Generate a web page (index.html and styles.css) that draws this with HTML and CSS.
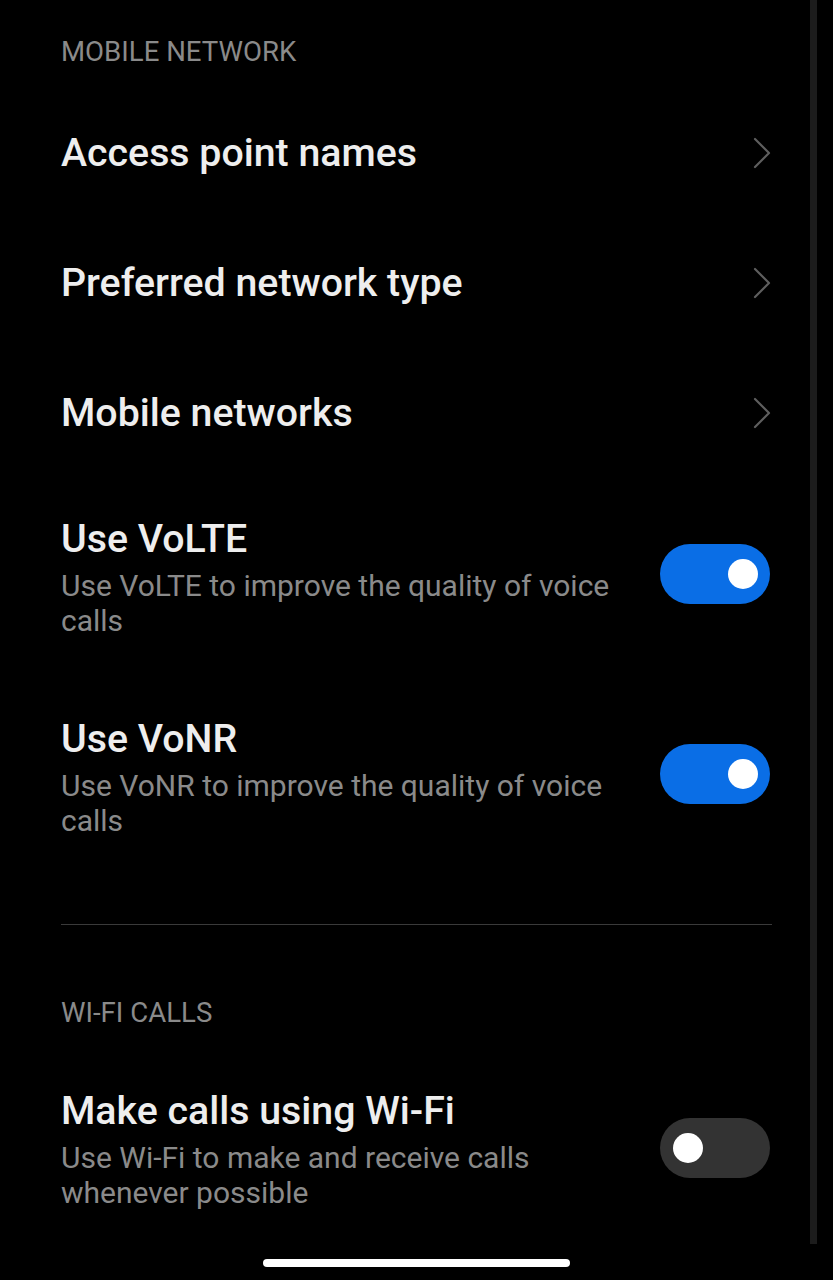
FILE: index.html
```html
<!DOCTYPE html>
<html>
<head>
<meta charset="utf-8">
<link rel="stylesheet" href="styles.css">
</head>
<body>
<div class="page">
  <div class="section-header first">MOBILE NETWORK</div>

  <div class="row-nav">
    <div class="title">Access point names</div>
    <svg class="chevron" width="18" height="32" viewBox="0 0 18 32"><polyline points="2,2 16,16 2,30" fill="none" stroke="#5e5e5e" stroke-width="2.2" stroke-linecap="round" stroke-linejoin="round"/></svg>
  </div>
  <div class="row-nav">
    <div class="title">Preferred network type</div>
    <svg class="chevron" width="18" height="32" viewBox="0 0 18 32"><polyline points="2,2 16,16 2,30" fill="none" stroke="#5e5e5e" stroke-width="2.2" stroke-linecap="round" stroke-linejoin="round"/></svg>
  </div>
  <div class="row-nav">
    <div class="title">Mobile networks</div>
    <svg class="chevron" width="18" height="32" viewBox="0 0 18 32"><polyline points="2,2 16,16 2,30" fill="none" stroke="#5e5e5e" stroke-width="2.2" stroke-linecap="round" stroke-linejoin="round"/></svg>
  </div>

  <div class="row-toggle volte">
    <div class="text">
      <div class="title">Use VoLTE</div>
      <div class="subtitle">Use VoLTE to improve the quality of voice calls</div>
    </div>
    <div class="toggle on"><span class="knob"></span></div>
  </div>
  <div class="row-toggle vonr">
    <div class="text">
      <div class="title">Use VoNR</div>
      <div class="subtitle">Use VoNR to improve the quality of voice calls</div>
    </div>
    <div class="toggle on"><span class="knob"></span></div>
  </div>

  <div class="divider"></div>

  <div class="section-header wifi">WI-FI CALLS</div>

  <div class="row-toggle wificall">
    <div class="text">
      <div class="title">Make calls using Wi-Fi</div>
      <div class="subtitle">Use Wi-Fi to make and receive calls whenever possible</div>
    </div>
    <div class="toggle off"><span class="knob"></span></div>
  </div>
</div>
<div class="scrollbar"></div>
<div class="home-indicator"></div>
</body>
</html>
```
FILE: styles.css
```css
html, body {
  margin: 0;
  padding: 0;
  background: #000;
}
body {
  width: 833px;
  height: 1280px;
  overflow: hidden;
  position: relative;
  font-family: Roboto, "Noto Sans", "Liberation Sans", sans-serif;
  color: #eeeeee;
}
.page {
  padding: 0 61px;
}
.section-header {
  font-size: 27.6px;
  line-height: 34px;
  color: #8a8a8a;
  font-weight: 400;
}
.section-header.first {
  padding: 35px 0 19px;
}
.section-header.wifi {
  padding-top: 71px;
}
.title {
  font-size: 39.3px;
  line-height: 48px;
  font-weight: 500;
  color: #eeeeee;
}
.subtitle {
  font-size: 30px;
  line-height: 35px;
  color: #8a8a8a;
  margin-top: 5px;
}
.row-nav {
  height: 130px;
  display: flex;
  align-items: center;
  justify-content: space-between;
}
.chevron {
  display: block;
  margin-right: 1px;
}
.row-toggle {
  display: flex;
  align-items: center;
  justify-content: space-between;
}
.row-toggle .text {
  width: 580px;
}
.row-toggle.volte {
  padding: 37px 0 30px;
}
.row-toggle.vonr {
  padding: 47px 0 0;
}
.row-toggle.wificall {
  padding-top: 57px;
}
.toggle {
  width: 110px;
  height: 60px;
  border-radius: 30px;
  margin-right: 2px;
  position: relative;
  flex: none;
}
.toggle.on {
  background: #0a6ee6;
  margin-bottom: 6px;
}
.toggle.off {
  background: #333333;
  margin-bottom: 2px;
}
.knob {
  position: absolute;
  top: 15px;
  width: 30px;
  height: 30px;
  border-radius: 50%;
  background: #ffffff;
}
.toggle.on .knob {
  right: 12px;
}
.toggle.off .knob {
  left: 13px;
}
.divider {
  margin-top: 86px;
  height: 1px;
  background: #3a3a3a;
}
.scrollbar {
  position: absolute;
  left: 810px;
  top: 0;
  width: 7px;
  height: 1244px;
  background: #1c1c1c;
}
.home-indicator {
  position: absolute;
  left: 263px;
  top: 1259px;
  width: 307px;
  height: 8px;
  border-radius: 4px;
  background: #ffffff;
}
```
